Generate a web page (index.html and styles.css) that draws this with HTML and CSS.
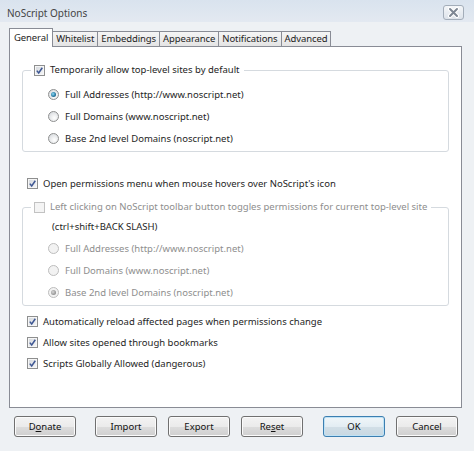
FILE: index.html
```html
<!DOCTYPE html>
<html>
<head>
<meta charset="utf-8">
<title>NoScript Options</title>
<link rel="stylesheet" href="styles.css">
</head>
<body>
<div class="window">
  <div class="titlebar">
    <span class="title">NoScript Options</span>
    <span class="close">
      <svg width="13" height="11" viewBox="0 0 13 11">
        <path d="M3 2 L10 9 M10 2 L3 9" stroke="#ffffff" stroke-width="4" stroke-linecap="round"/>
        <path d="M3 2 L10 9 M10 2 L3 9" stroke="#7d8693" stroke-width="2" stroke-linecap="round"/>
      </svg>
    </span>
  </div>
  <div class="client">
    <div class="tabs">
      <div class="tab selected">General</div>
      <div class="tab">Whitelist</div>
      <div class="tab">Embeddings</div>
      <div class="tab">Appearance</div>
      <div class="tab">Notifications</div>
      <div class="tab">Advanced</div>
    </div>
    <div class="panel">
      <fieldset class="group g1">
        <legend>
          <span class="cb"><svg viewBox="0 0 9 9" width="9" height="9"><path d="M1.8 4.6 L3.7 7 L7.3 1.8" fill="none" stroke="#3e5793" stroke-width="1.5"/></svg></span>
          <span>Temporarily allow top-level sites by default</span>
        </legend>
        <div class="rows">
          <div class="rrow"><span class="radio on"></span><span>Full Addresses (http://www.noscript.net)</span></div>
          <div class="rrow"><span class="radio"></span><span>Full Domains (www.noscript.net)</span></div>
          <div class="rrow"><span class="radio"></span><span>Base 2nd level Domains (noscript.net)</span></div>
        </div>
      </fieldset>

      <div class="crow open">
        <span class="cb"><svg viewBox="0 0 9 9" width="9" height="9"><path d="M1.8 4.6 L3.7 7 L7.3 1.8" fill="none" stroke="#3e5793" stroke-width="1.5"/></svg></span>
        <span>Open permissions menu when mouse hovers over NoScript's icon</span>
      </div>

      <fieldset class="group g2">
        <legend class="off">
          <span class="cb dis"></span>
          <span>Left clicking on NoScript toolbar button toggles permissions for current top-level site</span>
        </legend>
        <div class="rows">
          <div class="hint">(ctrl+shift+BACK SLASH)</div>
          <div class="rrow off"><span class="radio dis"></span><span>Full Addresses (http://www.noscript.net)</span></div>
          <div class="rrow off"><span class="radio dis"></span><span>Full Domains (www.noscript.net)</span></div>
          <div class="rrow off"><span class="radio dis ondis"></span><span>Base 2nd level Domains (noscript.net)</span></div>
        </div>
      </fieldset>

      <div class="checks">
        <div class="crow">
          <span class="cb"><svg viewBox="0 0 9 9" width="9" height="9"><path d="M1.8 4.6 L3.7 7 L7.3 1.8" fill="none" stroke="#3e5793" stroke-width="1.5"/></svg></span>
          <span>Automatically reload affected pages when permissions change</span>
        </div>
        <div class="crow">
          <span class="cb"><svg viewBox="0 0 9 9" width="9" height="9"><path d="M1.8 4.6 L3.7 7 L7.3 1.8" fill="none" stroke="#3e5793" stroke-width="1.5"/></svg></span>
          <span>Allow sites opened through bookmarks</span>
        </div>
        <div class="crow">
          <span class="cb"><svg viewBox="0 0 9 9" width="9" height="9"><path d="M1.8 4.6 L3.7 7 L7.3 1.8" fill="none" stroke="#3e5793" stroke-width="1.5"/></svg></span>
          <span>Scripts Globally Allowed (dangerous)</span>
        </div>
      </div>
    </div>

    <div class="buttons">
      <div class="btn">D<u>o</u>nate</div>
      <div class="btn wide-gap">Import</div>
      <div class="btn">Export</div>
      <div class="btn">Re<u>s</u>et</div>
      <div class="btn default wide-gap">OK</div>
      <div class="btn">Cancel</div>
    </div>
  </div>
</div>
</body>
</html>
```

FILE: styles.css
```css
* { box-sizing: border-box; }

html, body {
  margin: 0;
  padding: 0;
}

body {
  width: 474px;
  height: 451px;
  overflow: hidden;
  background: #eef1f4;
  font-family: "Noto Sans", "Open Sans", sans-serif;
  font-size: 9.5px;
  color: #1e1e1e;
}

.window {
  height: 451px;
  display: flex;
  flex-direction: column;
}

.titlebar {
  height: 22px;
  flex: none;
  display: flex;
  align-items: center;
  justify-content: space-between;
  padding: 0 10px 0 7px;
  background: linear-gradient(#d9e3ee, #e3e9f1);
}

.title {
  font-size: 10px;
  color: #444444;
  padding-top: 3px;
}

.close {
  width: 21px;
  height: 15px;
  margin-top: 2px;
  border: 1px solid #a3adb9;
  border-radius: 3px;
  background: linear-gradient(#f4f6f9, #dde3ea);
  display: flex;
  align-items: center;
  justify-content: center;
}

.close svg { display: block; }

.client {
  padding: 6px 12px 0 9px;
}

.tabs {
  display: flex;
  align-items: flex-end;
  height: 19px;
  margin-bottom: -1px;
}

.tab {
  height: 15px;
  margin-bottom: 1px;
  padding: 0 3px;
  border: 1px solid #898c95;
  border-left: none;
  border-bottom: none;
  background: linear-gradient(#f5f5f5, #e4e4e4);
  line-height: 13px;
  white-space: nowrap;
  letter-spacing: -0.1px;
}

.tab.selected {
  position: relative;
  height: 19px;
  margin-bottom: 0;
  padding: 0 4px;
  border-left: 1px solid #898c95;
  background: #ffffff;
  line-height: 17px;
}

.panel {
  height: 362px;
  border: 1px solid #898c95;
  background: #ffffff;
  padding: 16px 12px 0;
}

.group {
  margin: 0;
  padding: 0;
  min-width: 0;
  border: 1px solid #d5dadf;
  border-radius: 3px;
}

.group legend {
  margin-left: 8px;
  padding: 0 4px 0 3px;
  height: 14px;
  display: flex;
  align-items: center;
  gap: 5px;
  line-height: 14px;
}

.g1 .rows {
  padding: 6px 0 2px 25px;
}

.g2 {
  margin-top: 6px;
}

.g2 .rows {
  padding: 2px 0 2px 25px;
}

.rrow {
  height: 22px;
  display: flex;
  align-items: center;
  gap: 6px;
}

.hint {
  height: 21px;
  display: flex;
  align-items: center;
  padding-left: 4px;
}

.off { color: #8e8e8e; }

.crow {
  height: 21px;
  display: flex;
  align-items: center;
  gap: 5px;
  padding-left: 5px;
}

.open { margin-top: 21px; }

.checks { margin-top: 5px; }

.cb {
  flex: none;
  width: 11px;
  height: 11px;
  border: 1px solid #8e8f8f;
  background: linear-gradient(135deg, #d3d7dc, #f7f7f8);
  box-shadow: inset 0 0 0 1px #f6f6f6;
  display: flex;
  align-items: center;
  justify-content: center;
}

.cb svg { display: block; }

.cb.dis {
  border-color: #c2c2c2;
  background: #f4f4f4;
  box-shadow: none;
}

.radio {
  flex: none;
  width: 11px;
  height: 11px;
  border-radius: 50%;
  border: 1px solid #8e8f8f;
  background: radial-gradient(circle at 60% 65%, #ffffff 0, #e6e8ea 55%, #cfd3d8 100%);
  display: flex;
  align-items: center;
  justify-content: center;
}

.radio.on::after {
  content: "";
  width: 5px;
  height: 5px;
  border-radius: 50%;
  background: radial-gradient(circle at 40% 40%, #8fdaf5 0, #2a7ea7 55%, #123c58 100%);
}

.radio.dis {
  border-color: #bdbdbd;
  background: #f2f2f2;
}

.radio.ondis::after {
  content: "";
  width: 5px;
  height: 5px;
  border-radius: 50%;
  background: radial-gradient(circle at 40% 40%, #d8d8d8 0, #9a9a9a 60%, #7c7c7c 100%);
}

.buttons {
  display: flex;
  gap: 11px;
  margin-top: 8px;
  padding-left: 5px;
}

.btn {
  width: 62px;
  height: 21px;
  border: 1px solid #707070;
  border-radius: 3px;
  background: linear-gradient(#f3f3f3 0%, #ebebeb 50%, #dddddd 50%, #cfcfcf 100%);
  box-shadow: inset 0 0 0 1px #fbfbfb;
  display: flex;
  align-items: center;
  justify-content: center;
  color: #111111;
}

.btn u { text-decoration-thickness: 1px; text-underline-offset: 1px; }

.wide-gap { margin-left: 8px; }

.btn.default {
  margin-left: 9px;
  border-color: #3c7fb1;
  background: linear-gradient(#f0f6f9 0%, #e3edf3 50%, #d2dfe7 50%, #c8d8e2 100%);
  box-shadow: inset 0 0 0 1px #bfe2f5;
}
```
